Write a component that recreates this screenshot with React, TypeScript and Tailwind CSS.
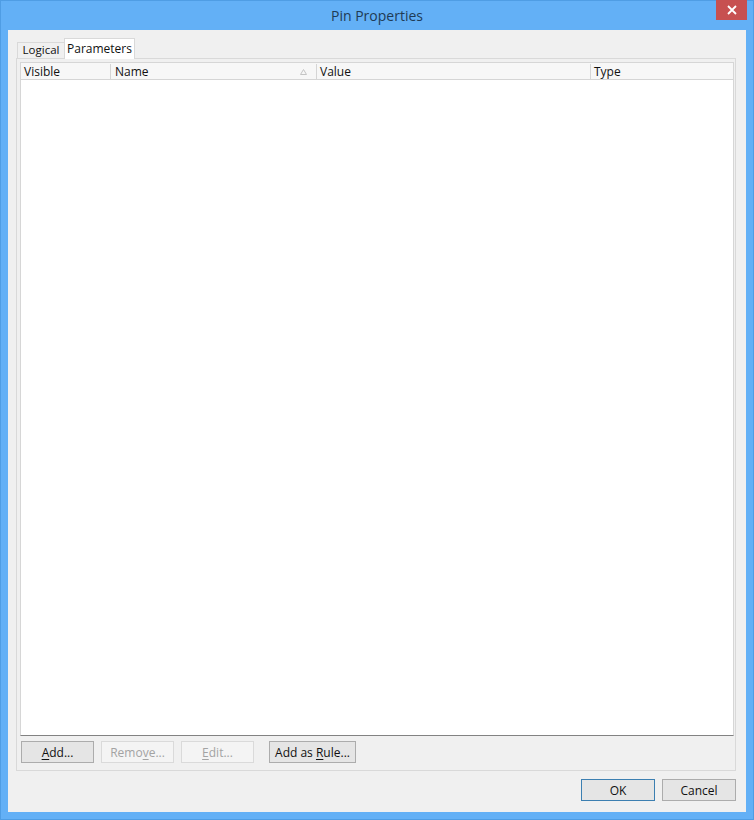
import React from "react";

const font = { fontFamily: '"Open Sans", "Noto Sans", sans-serif' };

function Btn({
  w,
  children,
  disabled,
  def,
}: {
  w: string;
  children: React.ReactNode;
  disabled?: boolean;
  def?: boolean;
}) {
  const base = "h-[22px] flex items-center justify-center text-[12px] leading-none border pt-[1px] ";
  const look = disabled
    ? "bg-[#f4f4f4] border-[#dadada] text-[#a3a3a3]"
    : def
    ? "bg-[#e5e5e5] border-[#3c7fb1] text-[#111]"
    : "bg-[#e5e5e5] border-[#acacac] text-[#111]";
  return <div className={base + look + " " + w}>{children}</div>;
}

export default function App() {
  return (
    <div
      className="w-[754px] h-[820px] bg-[#63b0f6] border border-[#4f9de4] flex flex-col"
      style={font}
    >
      {/* Title bar */}
      <div className="relative h-[29px] shrink-0 flex items-center justify-center">
        <span className="text-[14px] text-[#1f3b55]">Pin Properties</span>
        <div className="absolute top-[-1px] right-[6px] w-[31px] h-[20px] bg-[#c75050] flex items-center justify-center">
          <svg width="10" height="10" viewBox="0 0 10 10">
            <path d="M1 1 L9 9 M9 1 L1 9" stroke="#fff" strokeWidth="1.8" />
          </svg>
        </div>
      </div>

      {/* Client area */}
      <div className="mx-[7px] h-[782px] bg-[#f0f0f0] flex flex-col text-[12px] text-[#111]">
        {/* Tabs */}
        <div className="ml-[9px] mt-[9px] h-[19px] flex items-end relative z-10">
          <div className="h-[16px] w-[47px] border border-[#d9d9d9] border-r-0 border-b-0 bg-[#f0f0f0] flex items-center justify-center text-[11.5px] leading-none pb-[2px]">
            Logical
          </div>
          <div className="h-[21px] w-[71px] border border-[#d9d9d9] border-b-0 bg-white flex items-center justify-center text-[12px] leading-none -mb-px">
            Parameters
          </div>
        </div>

        {/* Tab panel */}
        <div className="ml-[8px] w-[720px] h-[713px] border border-[#d9d9d9] bg-[#f0f0f0] pl-[3px] pt-[3px] flex flex-col">
          {/* List */}
          <div className="w-[714px] h-[674px] bg-white border border-[#d6d6d6] border-b-[#828282] flex flex-col">
            <div className="h-[17px] flex bg-[#f7f7f7] border-b border-[#d5d5d5] text-[12px] leading-none pt-[1px]">
              <div className="w-[90px] border-r border-[#d5d5d5] flex items-center pl-[3px]">Visible</div>
              <div className="w-[206px] border-r border-[#d5d5d5] flex items-center pl-[4px] relative">
                Name
                <svg className="absolute right-[9px] top-[5px]" width="7" height="6" viewBox="0 0 7 6">
                  <path d="M0.5 5.5 L3.5 0.5 L6.5 5.5 Z" fill="none" stroke="#c4c4c4" strokeWidth="1" />
                </svg>
              </div>
              <div className="w-[274px] border-r border-[#d5d5d5] flex items-center pl-[3px]">Value</div>
              <div className="flex-1 flex items-center pl-[3px]">Type</div>
            </div>
            <div className="flex-1" />
          </div>

          {/* Buttons */}
          <div className="mt-[5px] flex">
            <Btn w="w-[73px] ml-px">
              <span>
                <span className="underline underline-offset-2">A</span>dd...
              </span>
            </Btn>
            <Btn w="w-[73px] ml-[7px]" disabled>
              <span>
                Remo<span className="underline underline-offset-2">v</span>e...
              </span>
            </Btn>
            <Btn w="w-[73px] ml-[7px]" disabled>
              <span>
                <span className="underline underline-offset-2">E</span>dit...
              </span>
            </Btn>
            <Btn w="w-[87px] ml-[15px]">
              <span>
                Add as <span className="underline underline-offset-2">R</span>ule...
              </span>
            </Btn>
          </div>
        </div>

        {/* OK / Cancel */}
        <div className="mt-[8px] flex justify-end pr-[10px] gap-[7px]">
          <Btn w="w-[74px]" def>
            OK
          </Btn>
          <Btn w="w-[74px]">Cancel</Btn>
        </div>
      </div>
    </div>
  );
}
